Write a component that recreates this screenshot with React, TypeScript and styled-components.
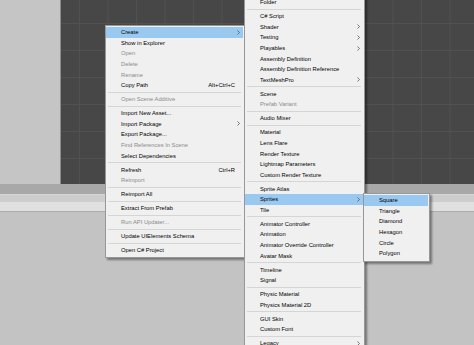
import React from "react";
import styled, { createGlobalStyle } from "styled-components";

const GlobalStyle = createGlobalStyle`
  html, body {
    margin: 0;
    padding: 0;
    background: #c3c3c3;
  }
  body {
    font-family: "Liberation Sans", Arial, sans-serif;
  }
`;

type Entry =
  | { sep: true }
  | {
      sep?: false;
      label: string;
      disabled?: boolean;
      shortcut?: string;
      sub?: boolean;
      active?: boolean;
    };

const S: Entry = { sep: true };

const assetMenu: Entry[] = [
  { label: "Create", sub: true, active: true },
  { label: "Show in Explorer" },
  { label: "Open", disabled: true },
  { label: "Delete", disabled: true },
  { label: "Rename", disabled: true },
  { label: "Copy Path", shortcut: "Alt+Ctrl+C" },
  S,
  { label: "Open Scene Additive", disabled: true },
  S,
  { label: "Import New Asset..." },
  { label: "Import Package", sub: true },
  { label: "Export Package..." },
  { label: "Find References In Scene", disabled: true },
  { label: "Select Dependencies" },
  S,
  { label: "Refresh", shortcut: "Ctrl+R" },
  { label: "Reimport", disabled: true },
  S,
  { label: "Reimport All" },
  S,
  { label: "Extract From Prefab" },
  S,
  { label: "Run API Updater...", disabled: true },
  S,
  { label: "Update UIElements Schema" },
  S,
  { label: "Open C# Project" },
];

const createMenu: Entry[] = [
  { label: "Folder" },
  S,
  { label: "C# Script" },
  { label: "Shader", sub: true },
  { label: "Testing", sub: true },
  { label: "Playables", sub: true },
  { label: "Assembly Definition" },
  { label: "Assembly Definition Reference" },
  { label: "TextMeshPro", sub: true },
  S,
  { label: "Scene" },
  { label: "Prefab Variant", disabled: true },
  S,
  { label: "Audio Mixer" },
  S,
  { label: "Material" },
  { label: "Lens Flare" },
  { label: "Render Texture" },
  { label: "Lightmap Parameters" },
  { label: "Custom Render Texture" },
  S,
  { label: "Sprite Atlas" },
  { label: "Sprites", sub: true, active: true },
  { label: "Tile" },
  S,
  { label: "Animator Controller" },
  { label: "Animation" },
  { label: "Animator Override Controller" },
  { label: "Avatar Mask" },
  S,
  { label: "Timeline" },
  { label: "Signal" },
  S,
  { label: "Physic Material" },
  { label: "Physics Material 2D" },
  S,
  { label: "GUI Skin" },
  { label: "Custom Font" },
  S,
  { label: "Legacy", sub: true },
];

const spritesMenu: Entry[] = [
  { label: "Square", active: true },
  { label: "Triangle" },
  { label: "Diamond" },
  { label: "Hexagon" },
  { label: "Circle" },
  { label: "Polygon" },
];

const Screen = styled.div`
  position: relative;
  width: 474px;
  height: 345px;
  overflow: hidden;
  display: flex;
  flex-direction: column;
  background: #c3c3c3;
`;

const TopRow = styled.div`
  display: flex;
  height: 184px;
  flex-shrink: 0;
`;

const SidePanel = styled.div`
  width: 60px;
  background: #c5c5c5;
  border-right: 1px solid #8c8c8c;
`;

const SceneView = styled.div`
  flex: 1;
  background-color: #474747;
  background-image: linear-gradient(to right, #515151 1px, transparent 1px),
    linear-gradient(to bottom, #515151 1px, transparent 1px);
  background-size: 28.5px 27px;
  background-position: 18px 23px;
`;

const Toolbar = styled.div`
  height: 10px;
  background: #a8a8a8;
  border-bottom: 1px solid #d6d6d6;
  flex-shrink: 0;
`;

const TabStrip = styled.div`
  height: 16px;
  background: linear-gradient(to bottom, #cdcdcd 0 7px, #e0e0e0 7px 100%);
  border-bottom: 1px solid #adadad;
  flex-shrink: 0;
`;

const LowerPanel = styled.div`
  flex: 1;
  background: #c3c3c3;
`;

const Menu = styled.div<{ $left: number; $top: number; $width: number }>`
  position: absolute;
  left: ${(p) => p.$left}px;
  top: ${(p) => p.$top}px;
  width: ${(p) => p.$width}px;
  box-sizing: border-box;
  background: #f0f0f0;
  border: 1px solid #979797;
  box-shadow: 2px 2px 2px rgba(0, 0, 0, 0.4);
  padding: 1px 1px 2px 0;
  display: flex;
  flex-direction: column;
`;

const Item = styled.div<{ $active?: boolean; $disabled?: boolean }>`
  height: 10.6px;
  display: flex;
  align-items: center;
  padding: 0 3px 0 15px;
  font-size: 5.8px;
  white-space: nowrap;
  color: ${(p) => (p.$disabled ? "#8a8a8a" : "#000")};
  background: ${(p) => (p.$active ? "#99c9f0" : "transparent")};
`;

const Label = styled.span`
  flex: 1;
`;

const Shortcut = styled.span`
  margin-right: 5px;
`;

const Separator = styled.div`
  height: 1px;
  margin: 1.2px 2px 1.2px 2px;
  background: #d5d5d5;
`;

const Arrow = () => (
  <svg width="3" height="5" viewBox="0 0 3 5">
    <path d="M0.5 0.5 L2.5 2.5 L0.5 4.5" fill="none" stroke="#555" strokeWidth="0.8" />
  </svg>
);

function ContextMenu(props: {
  entries: Entry[];
  left: number;
  top: number;
  width: number;
}) {
  return (
    <Menu $left={props.left} $top={props.top} $width={props.width}>
      {props.entries.map((e, i) =>
        e.sep ? (
          <Separator key={i} />
        ) : (
          <Item key={i} $active={e.active} $disabled={e.disabled}>
            <Label>{e.label}</Label>
            {e.shortcut && <Shortcut>{e.shortcut}</Shortcut>}
            {e.sub && <Arrow />}
          </Item>
        ),
      )}
    </Menu>
  );
}

export default function App() {
  return (
    <>
      <GlobalStyle />
      <Screen>
        <TopRow>
          <SidePanel />
          <SceneView />
        </TopRow>
        <Toolbar />
        <TabStrip />
        <LowerPanel />
        <ContextMenu entries={assetMenu} left={105} top={25} width={140} />
        <ContextMenu entries={createMenu} left={244} top={-5} width={121} />
        <ContextMenu entries={spritesMenu} left={363} top={193} width={67} />
      </Screen>
    </>
  );
}
